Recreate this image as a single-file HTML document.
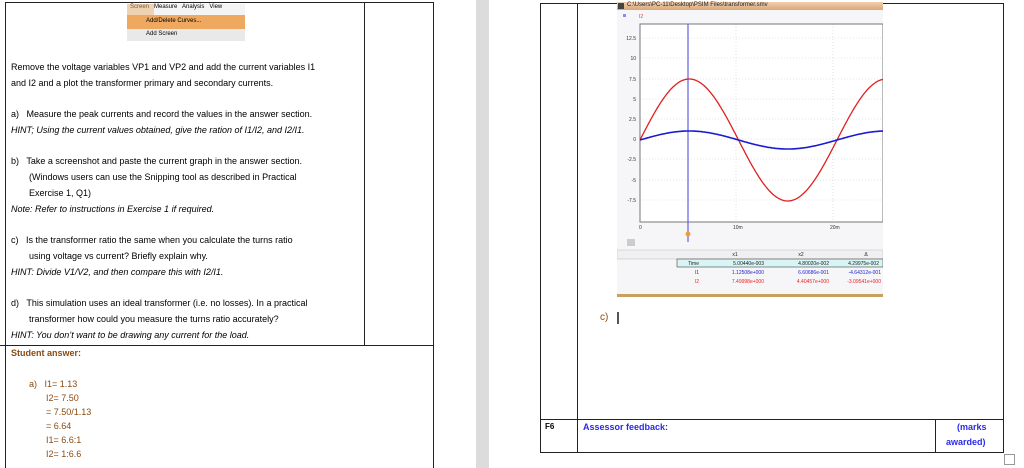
<!DOCTYPE html><html><head><meta charset="utf-8"><style>
body{margin:0;width:1024px;height:468px;background:#fff;position:relative;overflow:hidden;font-family:"Liberation Sans",sans-serif;}
.a{position:absolute;white-space:nowrap;font-size:9px;color:#000;}
.i{font-style:italic}
.l{position:absolute;background:#222}
.o{color:#8a4a12}
.s{font-size:6px;position:absolute;white-space:nowrap;color:#333}
</style></head><body>
<div class="l" style="left:5px;top:2px;width:428px;height:1px"></div>
<div class="l" style="left:5px;top:2px;width:1px;height:466px"></div>
<div class="l" style="left:364px;top:2px;width:1px;height:344px"></div>
<div class="l" style="left:433px;top:2px;width:1px;height:466px"></div>
<div class="l" style="left:0px;top:345px;width:434px;height:1px"></div>
<div style="position:absolute;left:476px;top:0;width:13px;height:468px;background:#dcdcdc"></div>
<div style="position:absolute;left:127px;top:4px;width:118px;height:11px;background:#f4f4f4"></div>
<div class="a" style="left:130px;top:4px;font-size:6px">Screen&nbsp;&nbsp; Measure&nbsp;&nbsp; Analysis&nbsp;&nbsp; View</div>
<div style="position:absolute;left:127px;top:4px;width:27px;height:11px;background:#e8b070;opacity:.5"></div>
<div style="position:absolute;left:127px;top:15px;width:118px;height:14px;background:#eea860"></div>
<div class="a" style="left:146px;top:18px;font-size:6px">Add/Delete Curves...</div>
<div style="position:absolute;left:127px;top:29px;width:118px;height:12px;background:#e9e9e9"></div>
<div class="a" style="left:146px;top:31px;font-size:6px">Add Screen</div>
<div class="a" style="left:11px;top:62px">Remove the voltage variables VP1 and VP2 and add the current variables I1</div>
<div class="a" style="left:11px;top:78px">and I2 and a plot the transformer primary and secondary currents.</div>
<div class="a" style="left:11px;top:109px">a)&nbsp;&nbsp; Measure the peak currents and record the values in the answer section.</div>
<div class="a i" style="left:11px;top:125px">HINT; Using the current values obtained, give the ration of I1/I2, and I2/I1.</div>
<div class="a" style="left:11px;top:156px">b)&nbsp;&nbsp; Take a screenshot and paste the current graph in the answer section.</div>
<div class="a" style="left:29px;top:172px">(Windows users can use the Snipping tool as described in Practical</div>
<div class="a" style="left:29px;top:188px">Exercise 1, Q1)</div>
<div class="a i" style="left:11px;top:204px">Note: Refer to instructions in Exercise 1 if required.</div>
<div class="a" style="left:11px;top:235px">c)&nbsp;&nbsp; Is the transformer ratio the same when you calculate the turns ratio</div>
<div class="a" style="left:29px;top:251px">using voltage vs current? Briefly explain why.</div>
<div class="a i" style="left:11px;top:267px">HINT: Divide V1/V2, and then compare this with I2/I1.</div>
<div class="a" style="left:11px;top:298px">d)&nbsp;&nbsp; This simulation uses an ideal transformer (i.e. no losses). In a practical</div>
<div class="a" style="left:29px;top:314px">transformer how could you measure the turns ratio accurately?</div>
<div class="a i" style="left:11px;top:330px">HINT: You don’t want to be drawing any current for the load.</div>
<div class="a o" style="left:11px;top:348px;font-weight:bold">Student answer:</div>
<div class="a o" style="left:29px;top:379px">a)&nbsp;&nbsp; I1= 1.13</div>
<div class="a o" style="left:46px;top:393px">I2= 7.50</div>
<div class="a o" style="left:46px;top:407px">= 7.50/1.13</div>
<div class="a o" style="left:46px;top:421px">= 6.64</div>
<div class="a o" style="left:46px;top:435px">I1= 6.6:1</div>
<div class="a o" style="left:46px;top:449px">I2= 1:6.6</div>
<div class="l" style="left:540px;top:3px;width:463px;height:1px"></div>
<div class="l" style="left:540px;top:3px;width:1px;height:450px"></div>
<div class="l" style="left:577px;top:3px;width:1px;height:450px"></div>
<div class="l" style="left:1003px;top:3px;width:1px;height:450px"></div>
<div class="l" style="left:540px;top:419px;width:463px;height:1px"></div>
<div class="l" style="left:540px;top:452px;width:464px;height:1px"></div>
<div class="l" style="left:935px;top:419px;width:1px;height:34px"></div>
<div style="position:absolute;left:1004px;top:454px;width:9px;height:9px;border:1px solid #999"></div>
<div class="a" style="left:545px;top:422px;font-weight:bold;font-size:8px">F6</div>
<div class="a" style="left:583px;top:422px;font-weight:bold;color:#2a2ae8;font-size:9px">Assessor feedback:</div>
<div class="a" style="left:957px;top:422px;font-weight:bold;color:#2a2ae8;font-size:9px">(marks</div>
<div class="a" style="left:946px;top:437px;font-weight:bold;color:#2a2ae8;font-size:9px">awarded)</div>
<div class="a o" style="left:600px;top:312px;font-size:10px">c)</div>
<div class="l" style="left:617px;top:312px;width:2px;height:12px;background:#555"></div>
<div style="position:absolute;left:617px;top:2px;width:266px;height:8px;background:linear-gradient(#f0d0b0,#d8a878)"></div>
<div style="position:absolute;left:618px;top:3px;width:6px;height:6px;background:#444"></div>
<div class="s" style="left:627px;top:2px;color:#222">C:\Users\PC-11\Desktop\PSIM Files\transformer.smv</div>
<div style="position:absolute;left:617px;top:10px;width:266px;height:287px;background:#f6f6f8"></div>
<svg style="position:absolute;left:617px;top:10px" width="266" height="287">
<rect x="23" y="14" width="243" height="198" fill="#fff"/>
<g stroke="#ccc" stroke-dasharray="1,2" stroke-width="0.6">
<line x1="23" y1="28" x2="266" y2="28"/><line x1="23" y1="48" x2="266" y2="48"/><line x1="23" y1="69" x2="266" y2="69"/><line x1="23" y1="89" x2="266" y2="89"/><line x1="23" y1="109" x2="266" y2="109"/><line x1="23" y1="129" x2="266" y2="129"/><line x1="23" y1="149" x2="266" y2="149"/><line x1="23" y1="170" x2="266" y2="170"/><line x1="23" y1="190" x2="266" y2="190"/>
<line x1="119" y1="14" x2="119" y2="212"/><line x1="216" y1="14" x2="216" y2="212"/></g>
<rect x="23" y="14" width="243" height="198" fill="none" stroke="#777"/>
<line x1="71" y1="14" x2="71" y2="232" stroke="#6060e0" stroke-width="1.2"/>
<path id="red" fill="none" stroke="#e02020" stroke-width="1.3"/>
<path id="blue" fill="none" stroke="#1a1ad0" stroke-width="1.6"/>
<g font-size="5" fill="#333" font-family="Liberation Sans" text-anchor="end">
<text x="19" y="30">12.5</text><text x="19" y="50">10</text><text x="19" y="71">7.5</text><text x="19" y="91">5</text><text x="19" y="111">2.5</text><text x="19" y="131">0</text><text x="19" y="151">-2.5</text><text x="19" y="172">-5</text><text x="19" y="192">-7.5</text></g>
<g font-size="5" fill="#333" font-family="Liberation Sans"><text x="22" y="219">0</text><text x="116" y="219">10m</text><text x="213" y="219">20m</text></g>
<rect x="6" y="4" width="3" height="3" fill="#88f"/><text x="22" y="8" font-size="5" fill="#e33">I2</text>
<circle cx="71" cy="224" r="2.5" fill="#f0a030"/>
<rect x="10" y="229" width="8" height="7" fill="#ccc"/>
<rect x="0" y="240" width="266" height="9" fill="#f0f0f0" stroke="#bbb" stroke-width="0.5"/>
<rect x="60" y="249" width="206" height="8" fill="#d8f4f4" stroke="#444" stroke-width="0.6"/>
<g font-size="5" font-family="Liberation Sans" text-anchor="end" fill="#222">
<text x="118" y="246" text-anchor="middle">x1</text><text x="184" y="246" text-anchor="middle">x2</text><text x="249" y="246" text-anchor="middle">Δ</text>
<text x="82" y="255">Time</text><text x="147" y="255">5.00440e-003</text><text x="212" y="255">4.80020e-002</text><text x="262" y="255">4.29975e-002</text>
<g fill="#22c"><text x="82" y="264">I1</text><text x="147" y="264">1.12508e+000</text><text x="212" y="264">6.60686e-001</text><text x="264" y="264">-4.64312e-001</text></g>
<g fill="#e22"><text x="82" y="273">I2</text><text x="147" y="273">7.49998e+000</text><text x="212" y="273">4.40457e+000</text><text x="264" y="273">-3.09541e+000</text></g></g>
<rect x="0" y="284" width="266" height="3" fill="#c8a060"/>
</svg>
<script>
var r='',b='';for(var x=0;x<=243;x++){var t=2*Math.PI*x/197;r+=(x?'L':'M')+(23+x)+','+(130-61*Math.sin(t)).toFixed(1);b+=(x?'L':'M')+(23+x)+','+(130-9*Math.sin(t)).toFixed(1);}
document.getElementById('red').setAttribute('d',r);document.getElementById('blue').setAttribute('d',b);
</script>
</body></html>
